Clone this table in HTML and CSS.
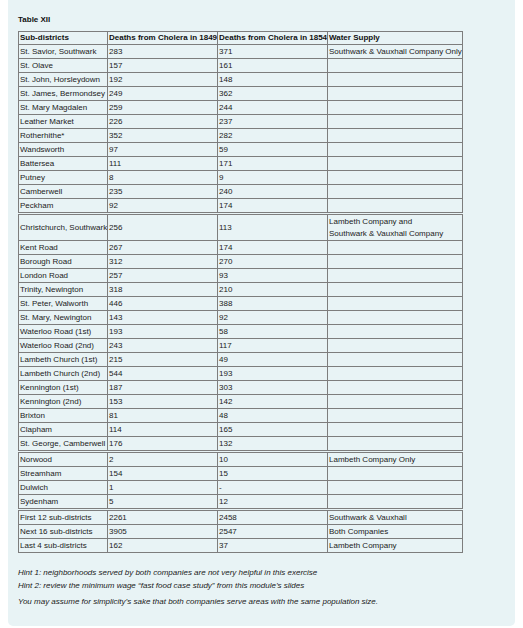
FILE: index.html
```html
<!DOCTYPE html>
<html>
<head>
<meta charset="utf-8">
<link rel="stylesheet" href="styles.css">
</head>
<body>
<div class="panel">
  <div class="title">Table XII</div>
  <table class="data">
    <colgroup>
      <col class="c1"><col class="c2"><col class="c3"><col class="c4">
    </colgroup>
    <thead>
      <tr><th>Sub-districts</th><th>Deaths from Cholera in 1849</th><th>Deaths from Cholera in 1854</th><th>Water Supply</th></tr>
    </thead>
    <tbody>
      <tr><td>St. Savior, Southwark</td><td>283</td><td>371</td><td>Southwark &amp; Vauxhall Company Only</td></tr>
      <tr><td>St. Olave</td><td>157</td><td>161</td><td></td></tr>
      <tr><td>St. John, Horsleydown</td><td>192</td><td>148</td><td></td></tr>
      <tr><td>St. James, Bermondsey</td><td>249</td><td>362</td><td></td></tr>
      <tr><td>St. Mary Magdalen</td><td>259</td><td>244</td><td></td></tr>
      <tr><td>Leather Market</td><td>226</td><td>237</td><td></td></tr>
      <tr><td>Rotherhithe*</td><td>352</td><td>282</td><td></td></tr>
      <tr><td>Wandsworth</td><td>97</td><td>59</td><td></td></tr>
      <tr><td>Battersea</td><td>111</td><td>171</td><td></td></tr>
      <tr><td>Putney</td><td>8</td><td>9</td><td></td></tr>
      <tr><td>Camberwell</td><td>235</td><td>240</td><td></td></tr>
      <tr><td>Peckham</td><td>92</td><td>174</td><td></td></tr>
    </tbody>
    <tbody>
      <tr><td>Christchurch, Southwark</td><td>256</td><td>113</td><td class="two">Lambeth Company and<br>Southwark &amp; Vauxhall Company</td></tr>
      <tr><td>Kent Road</td><td>267</td><td>174</td><td></td></tr>
      <tr><td>Borough Road</td><td>312</td><td>270</td><td></td></tr>
      <tr><td>London Road</td><td>257</td><td>93</td><td></td></tr>
      <tr><td>Trinity, Newington</td><td>318</td><td>210</td><td></td></tr>
      <tr><td>St. Peter, Walworth</td><td>446</td><td>388</td><td></td></tr>
      <tr><td>St. Mary, Newington</td><td>143</td><td>92</td><td></td></tr>
      <tr><td>Waterloo Road (1st)</td><td>193</td><td>58</td><td></td></tr>
      <tr><td>Waterloo Road (2nd)</td><td>243</td><td>117</td><td></td></tr>
      <tr><td>Lambeth Church (1st)</td><td>215</td><td>49</td><td></td></tr>
      <tr><td>Lambeth Church (2nd)</td><td>544</td><td>193</td><td></td></tr>
      <tr><td>Kennington (1st)</td><td>187</td><td>303</td><td></td></tr>
      <tr><td>Kennington (2nd)</td><td>153</td><td>142</td><td></td></tr>
      <tr><td>Brixton</td><td>81</td><td>48</td><td></td></tr>
      <tr><td>Clapham</td><td>114</td><td>165</td><td></td></tr>
      <tr><td>St. George, Camberwell</td><td>176</td><td>132</td><td></td></tr>
    </tbody>
    <tbody>
      <tr><td>Norwood</td><td>2</td><td>10</td><td>Lambeth Company Only</td></tr>
      <tr><td>Streamham</td><td>154</td><td>15</td><td></td></tr>
      <tr><td>Dulwich</td><td>1</td><td>-</td><td></td></tr>
      <tr><td>Sydenham</td><td>5</td><td>12</td><td></td></tr>
    </tbody>
    <tbody>
      <tr><td>First 12 sub-districts</td><td>2261</td><td>2458</td><td>Southwark &amp; Vauxhall</td></tr>
      <tr><td>Next 16 sub-districts</td><td>3905</td><td>2547</td><td>Both Companies</td></tr>
      <tr><td>Last 4 sub-districts</td><td>162</td><td>37</td><td>Lambeth Company</td></tr>
    </tbody>
  </table>
  <p class="hints">Hint 1: neighborhoods served by both companies are not very helpful in this exercise<br>Hint 2: review the minimum wage “fast food case study” from this module’s slides</p>
  <p class="note">You may assume for simplicity’s sake that both companies serve areas with the same population size.</p>
</div>
</body>
</html>
```

FILE: styles.css
```css
html, body {
  margin: 0;
  padding: 0;
  background: #ffffff;
}
body {
  padding: 0 8px;
  font-family: "Liberation Sans", Arial, sans-serif;
  color: #222222;
}
.panel {
  background: #e8f3f5;
  border-radius: 0 0 5px 5px;
  padding: 15px 10px 20px 10px;
  height: 591px;
}
.title {
  font-weight: bold;
  font-size: 8px;
  line-height: 10px;
  color: #111111;
  margin-bottom: 6px;
}
.data {
  border-collapse: collapse;
  table-layout: fixed;
  width: 445px;
  font-size: 8px;
}
.c1 { width: 89px; }
.c2 { width: 110px; }
.c3 { width: 110px; }
.c4 { width: 135px; }
.data th, .data td {
  border: 1px solid #7d7d7d;
  padding: 1px 0 1px 1px;
  text-align: left;
  white-space: nowrap;
  overflow: hidden;
  vertical-align: middle;
}
.data th {
  font-weight: bold;
  color: #111111;
  line-height: 10px;
}
.data td {
  line-height: 11px;
}
.data td.two {
  line-height: 11.5px;
}
.data tbody + tbody {
  border-top: 3px double #7d7d7d;
}
.hints {
  margin: 13px 0 0 0;
  font-size: 8px;
  line-height: 13px;
  font-style: italic;
  color: #1a1a1a;
}
.note {
  margin: 3px 0 0 0;
  font-size: 8px;
  line-height: 13px;
  font-style: italic;
  color: #1a1a1a;
}
```
